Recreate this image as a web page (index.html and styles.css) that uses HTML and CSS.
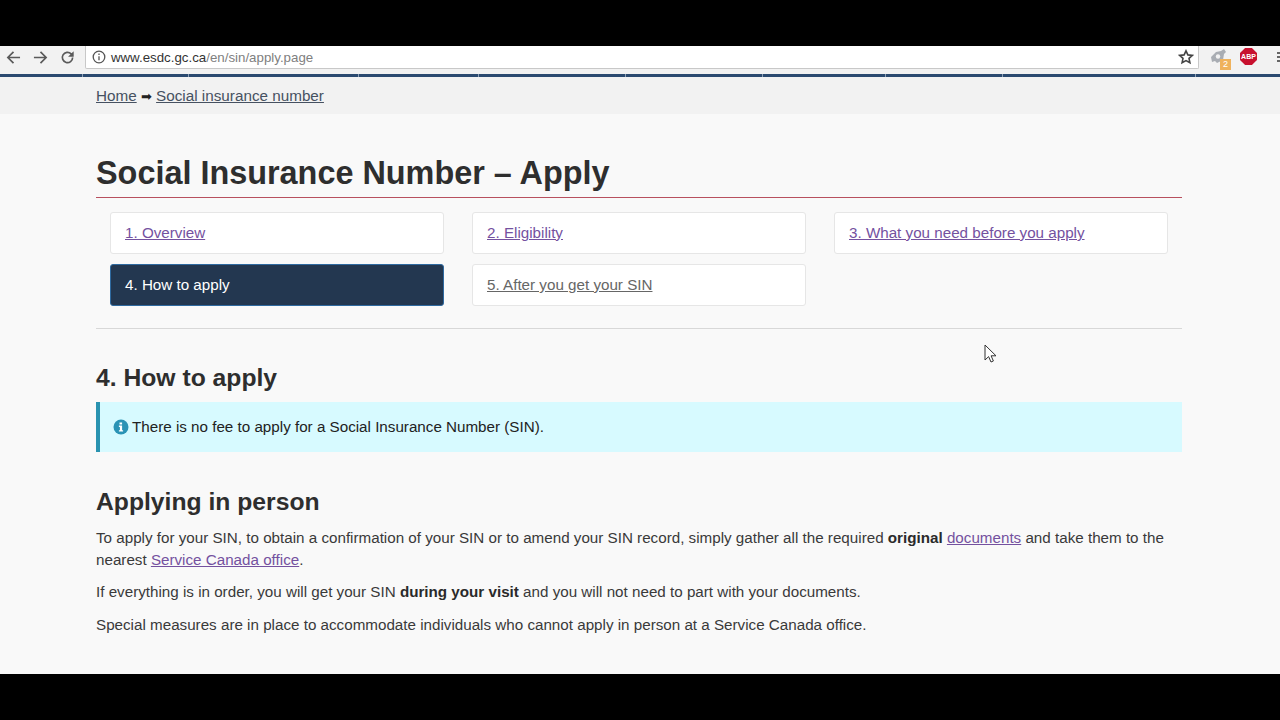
FILE: index.html
```html
<!DOCTYPE html>
<html lang="en">
<head>
    <meta charset="UTF-8">
    <title>Social Insurance Number - Apply</title>
    <link rel="stylesheet" href="styles.css">
</head>
<body>

    <div class="letterbox"></div>

    <div class="browser-bar">
        <svg class="nav-icon" viewBox="0 0 16 16"><path d="M15 8H2M8 2L2 8l6 6" /></svg>
        <svg class="nav-icon" viewBox="0 0 16 16"><path d="M1 8h13M8 2l6 6-6 6" /></svg>
        <svg class="nav-icon" viewBox="0 0 16 16"><path d="M13.5 8a5.5 5.5 0 1 1-1.6-3.9L13.5 6" /><path class="fill" d="M14.6 1.2v6H8.6z" /></svg>
        <div class="address">
            <svg class="info-icon" viewBox="0 0 14 14"><circle cx="7" cy="7" r="5.8" /><path d="M7 6.2v4M7 3.6v1.4" /></svg>
            <span class="host">www.esdc.gc.ca</span><span class="path">/en/sin/apply.page</span>
            <svg class="star" viewBox="0 0 16 16"><path d="M8 1.8l1.9 4.1 4.4.5-3.3 3 .9 4.4L8 11.6l-3.9 2.2.9-4.4-3.3-3 4.4-.5z" /></svg>
        </div>
        <div class="ext-icon">
            <svg viewBox="0 0 18 18"><path d="M2 9l5-5 5-1 3-2 2 3-2 2-1 6-6 3-2-2-3 1z" /><circle cx="9" cy="8.5" r="2.2" fill="#f2f2f2" /></svg>
            <span class="ext-badge">2</span>
        </div>
        <div class="abp">ABP</div>
        <div class="menu-dots"><i></i><i></i><i></i></div>
    </div>

    <div class="site-nav-line">
        <span class="seg-a"></span><span class="seg-b"></span><span class="seg-c"></span><span class="seg-d"></span><span class="seg-e"></span><span class="seg-f"></span><span class="seg-g"></span><span class="seg-h"></span><span class="seg-i"></span>
    </div>

    <div class="breadcrumb">
        <a href="#">Home</a> <span class="arrow">➡</span> <a href="#">Social insurance number</a>
    </div>

    <main class="content">
        <h1>Social Insurance Number – Apply</h1>

        <div class="steps">
            <a class="step visited" href="#">1. Overview</a>
            <a class="step visited" href="#">2. Eligibility</a>
            <a class="step visited" href="#">3. What you need before you apply</a>
            <a class="step active" href="#">4. How to apply</a>
            <a class="step" href="#">5. After you get your SIN</a>
        </div>

        <hr>

        <h2 class="step-title">4. How to apply</h2>

        <div class="notice">
            <svg class="notice-icon" viewBox="0 0 16 16"><circle cx="8" cy="8" r="7.5" /><path d="M6.5 3.4h2.6v2.1H6.5zM5.9 6.6h3.2v4.6h1v1.4H5.9v-1.4h1V8H5.9z" /></svg>
            There is no fee to apply for a Social Insurance Number (SIN).
        </div>

        <h2 class="section-title">Applying in person</h2>

        <p>To apply for your SIN, to obtain a confirmation of your SIN or to amend your SIN record, simply gather all the required <b>original</b> <a class="visited" href="#">documents</a> and take them to the nearest <a class="visited" href="#">Service Canada office</a>.</p>
        <p class="wide-gap">If everything is in order, you will get your SIN <b>during your visit</b> and you will not need to part with your documents.</p>
        <p>Special measures are in place to accommodate individuals who cannot apply in person at a Service Canada office.</p>
    </main>

    <svg class="cursor" viewBox="0 0 14 20"><path d="M1 1v15l3.6-3.4L7 18l2.4-1-2.3-5.2H12z" /></svg>

    <div class="letterbox bottom"></div>

</body>
</html>
```

FILE: styles.css
```css
* {
    margin: 0;
    padding: 0;
    box-sizing: border-box;
}

html, body {
    height: 720px;
    overflow: hidden;
}

body {
    font-family: 'Liberation Sans', Arial, sans-serif;
    background: #f9f9f9;
    color: #333;
    position: relative;
    display: flex;
    flex-direction: column;
}

.letterbox {
    height: 46px;
    background: #000;
    flex: none;
}

.letterbox.bottom {
    position: absolute;
    left: 0;
    right: 0;
    bottom: 0;
}

.browser-bar {
    height: 28px;
    flex: none;
    background: #f2f2f2;
    display: flex;
    align-items: flex-start;
    padding-left: 5px;
}

.nav-icon {
    width: 15px;
    height: 15px;
    margin: 4px 11px 0 1px;
    fill: none;
    stroke: #5a5a5a;
    stroke-width: 1.8;
}

.nav-icon .fill {
    fill: #5a5a5a;
    stroke: none;
}

.address {
    width: 1116px;
    height: 23px;
    margin-left: -1px;
    background: #fff;
    border: 1px solid #c8c8c8;
    border-top: none;
    border-radius: 0 0 2px 2px;
    display: flex;
    align-items: center;
    padding-left: 6px;
    font-size: 13.3px;
}

.info-icon {
    width: 14px;
    height: 14px;
    margin-right: 5px;
    fill: none;
    stroke: #555;
    stroke-width: 1.3;
}

.host {
    color: #333;
}

.path {
    color: #808080;
}

.star {
    width: 16px;
    height: 16px;
    margin-left: auto;
    margin-right: 4px;
    fill: none;
    stroke: #444;
    stroke-width: 1.6;
}

.ext-icon {
    position: relative;
    width: 18px;
    height: 18px;
    margin: 2px 0 0 10px;
}

.ext-icon svg {
    width: 18px;
    height: 18px;
    fill: #a9adb3;
}

.ext-badge {
    position: absolute;
    left: 11px;
    top: 11px;
    width: 11px;
    height: 11px;
    background: #efb25c;
    color: #fff;
    font-size: 9px;
    line-height: 11px;
    text-align: center;
}

.abp {
    width: 17px;
    height: 17px;
    margin: 2px 0 0 13px;
    clip-path: polygon(30% 0, 70% 0, 100% 30%, 100% 70%, 70% 100%, 30% 100%, 0 70%, 0 30%);
    background: #c8102e;
    color: #fff;
    font-size: 7px;
    font-weight: bold;
    line-height: 17px;
    text-align: center;
}

.menu-dots {
    margin: 6px 0 0 20px;
    display: flex;
    flex-direction: column;
    gap: 2px;
}

.menu-dots i {
    display: block;
    width: 3px;
    height: 2px;
    background: #666;
}

.site-nav-line {
    height: 3px;
    flex: none;
    background: #2b4a70;
    display: flex;
}

.site-nav-line span {
    border-right: 1px solid #8ea0b5;
}

.seg-a { width: 83px; }
.seg-b { width: 106px; }
.seg-c { width: 170px; }
.seg-d { width: 120px; }
.seg-e { width: 147px; }
.seg-f { width: 137px; }
.seg-g { width: 123px; }
.seg-h { width: 117px; }
.seg-i { width: 193px; }

.breadcrumb {
    height: 37px;
    flex: none;
    background: #f2f2f2;
    padding: 10px 0 0 96px;
    font-size: 15.25px;
    line-height: 18px;
    color: #222;
}

.breadcrumb a {
    color: #465161;
}

.arrow {
    font-family: 'DejaVu Sans', sans-serif;
    font-size: 13px;
}

.content {
    padding: 0 98px 0 96px;
}

h1 {
    font-size: 32.4px;
    line-height: 38px;
    font-weight: bold;
    color: #2e2e2e;
    margin-top: 40px;
    padding-bottom: 5px;
    border-bottom: 1px solid #b8505f;
}

.steps {
    display: grid;
    grid-template-columns: repeat(3, 334px);
    column-gap: 28px;
    row-gap: 10px;
    padding: 14px 14px 0;
}

.step {
    height: 42px;
    background: #fff;
    border: 1px solid #e6e6e6;
    border-radius: 3px;
    padding: 0 14px;
    font-size: 15.2px;
    line-height: 40px;
    color: #666;
}

.step.active {
    background: #233750;
    border-color: #2f6aa0;
    color: #fff;
    text-decoration: none;
}

.visited {
    color: #74519f;
}

hr {
    border: none;
    border-top: 1px solid #d8d8d8;
    margin-top: 22px;
}

.step-title {
    font-size: 24.7px;
    line-height: 28px;
    font-weight: bold;
    color: #2e2e2e;
    margin-top: 35px;
}

.notice {
    height: 50px;
    margin-top: 10px;
    padding-bottom: 1px;
    background: #d7faff;
    border-left: 4px solid #2a93b0;
    padding-left: 13px;
    display: flex;
    align-items: center;
    font-size: 15.2px;
    color: #222;
}

.notice-icon {
    width: 16px;
    height: 16px;
    margin-right: 3px;
    fill-rule: evenodd;
}

.notice-icon circle {
    fill: #2a93b5;
}

.notice-icon path {
    fill: #fff;
}

.section-title {
    font-size: 24.7px;
    line-height: 28px;
    font-weight: bold;
    color: #2e2e2e;
    margin-top: 36px;
    margin-bottom: 11px;
}

p {
    font-size: 15.2px;
    line-height: 22px;
    margin-bottom: 10px;
    color: #3a3a3a;
}

p b {
    color: #2a2a2a;
}

p.wide-gap {
    margin-bottom: 11px;
}

.cursor {
    position: absolute;
    left: 984px;
    top: 344px;
    width: 14px;
    height: 20px;
    fill: #fff;
    stroke: #333;
    stroke-width: 1;
}
```
